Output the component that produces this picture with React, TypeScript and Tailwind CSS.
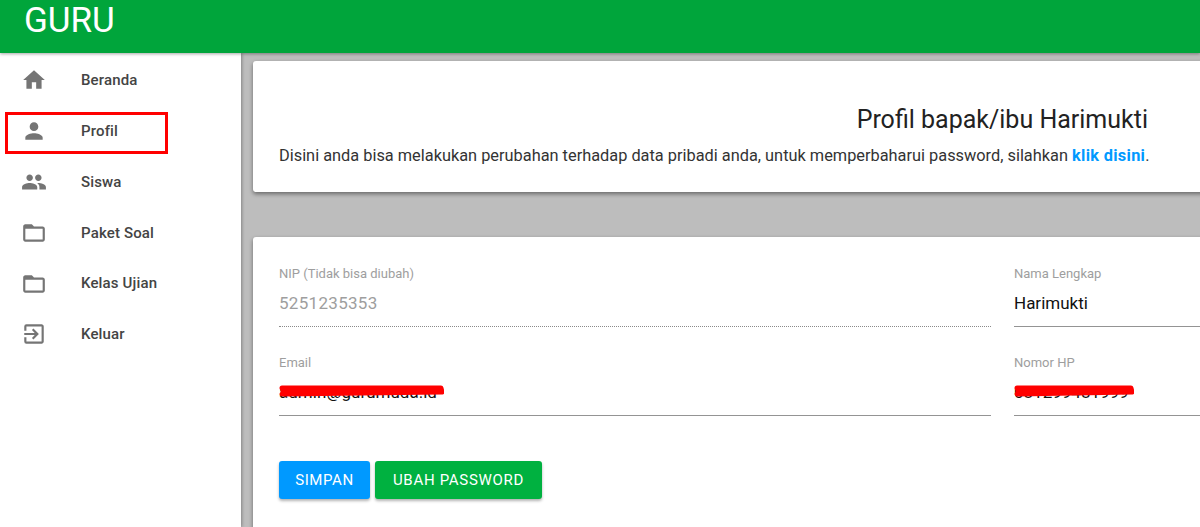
import React from 'react';
import { MdHome, MdPerson, MdPeople, MdFolderOpen, MdExitToApp } from 'react-icons/md';

const menu = [
  { label: 'Beranda', icon: MdHome },
  { label: 'Profil', icon: MdPerson },
  { label: 'Siswa', icon: MdPeople },
  { label: 'Paket Soal', icon: MdFolderOpen },
  { label: 'Kelas Ujian', icon: MdFolderOpen },
  { label: 'Keluar', icon: MdExitToApp },
];

// Red marker scribble drawn over a private value
const Scribble = ({ width, className }: { width: number; className: string }) => (
  <svg className={className} width={width} height="16" viewBox={`0 0 ${width} 16`} fill="none">
    <path
      d={`M3 5 L${width - 3} 5 L${width - 2} 9 L3 11 L${width - 4} 8 L4 8`}
      stroke="#ff0000"
      strokeWidth="5"
      strokeLinecap="round"
      strokeLinejoin="round"
    />
  </svg>
);

const Field = ({
  label,
  value,
  disabled,
  scribble,
}: {
  label: string;
  value: string;
  disabled?: boolean;
  scribble?: number;
}) => (
  <div className="h-[71px]">
    <div className="text-[13px] leading-[18px] text-[#9e9e9e]">{label}</div>
    <div
      className={`relative mt-[7px] h-[37px] text-[17px] leading-[26px] border-b ${
        disabled
          ? 'text-[#9e9e9e] tracking-[0.3px] border-dotted border-[#8a8a8a]'
          : 'text-[#111] border-[#949494]'
      }`}
    >
      {value}
      {scribble && <Scribble width={scribble} className="absolute left-0 top-[4px]" />}
    </div>
  </div>
);

export default function App() {
  return (
    <div className="relative h-[527px] w-[1200px] overflow-hidden bg-[#bdbdbd] font-['Roboto',sans-serif]">
      <header className="relative z-20 flex h-[53px] items-start bg-[#00a53b] pl-[24px] shadow-[0_1px_3px_rgba(0,0,0,0.35)]">
        <h1 className="text-[35px] leading-[41px] font-normal text-white">GURU</h1>
      </header>

      <div className="flex h-[474px]">
        <aside className="relative z-10 h-full w-[241px] shrink-0 bg-white pt-[2px] shadow-[1px_0_3px_rgba(0,0,0,0.3)]">
          {menu.map((item) => {
            const Icon = item.icon;
            return (
              <div key={item.label} className="flex h-[50.8px] items-center pl-[21px]">
                <Icon size={26} className="shrink-0 text-[#757575]" />
                <span className="ml-[34px] text-[15px] font-medium tracking-[0.15px] text-[#444]">{item.label}</span>
              </div>
            );
          })}
          <div className="absolute left-[5px] top-[59px] h-[42px] w-[163px] border-[3px] border-[#ff0000]" />
        </aside>

        <main className="w-[1000px] shrink-0 pl-[12px] pt-[8px]">
          <section className="h-[131px] w-[1000px] rounded-[3px] bg-white pl-[26px] shadow-[0_2px_4px_rgba(0,0,0,0.45)]">
            <div className="w-[869px] pt-[43px]">
              <h2 className="text-right text-[25px] leading-[32px] font-normal text-[#222]">
                Profil bapak/ibu Harimukti
              </h2>
              <p className="mt-[8px] text-[16.35px] leading-[24px] whitespace-nowrap text-[#333]">
                Disini anda bisa melakukan perubahan terhadap data pribadi anda, untuk memperbaharui password, silahkan{' '}
                <a className="font-bold tracking-[0.3px] text-[#0099ff]">klik disini</a>.
              </p>
            </div>
          </section>

          <section className="mt-[45px] h-[400px] w-[1000px] rounded-[3px] bg-white pl-[26px] pt-[28px] shadow-[0_2px_4px_rgba(0,0,0,0.45)]">
            <div className="grid grid-cols-[712px_400px] gap-x-[23px] gap-y-[18px]">
              <Field label="NIP (Tidak bisa diubah)" value="5251235353" disabled />
              <Field label="Nama Lengkap" value="Harimukti" />
              <Field label="Email" value="admin@gurumuda.id" scribble={165} />
              <Field label="Nomor HP" value="081299481999" scribble={120} />
            </div>
            <div className="mt-[36px] flex gap-[5px]">
              <button className="h-[38px] w-[91px] rounded-[3px] bg-[#0099ff] text-[15px] font-normal tracking-[0.6px] text-white shadow-[0_2px_3px_rgba(0,0,0,0.3)]">
                SIMPAN
              </button>
              <button className="h-[38px] w-[167px] rounded-[3px] bg-[#00b140] text-[15px] font-normal tracking-[0.7px] text-white shadow-[0_2px_3px_rgba(0,0,0,0.3)]">
                UBAH PASSWORD
              </button>
            </div>
          </section>
        </main>
      </div>
    </div>
  );
}
